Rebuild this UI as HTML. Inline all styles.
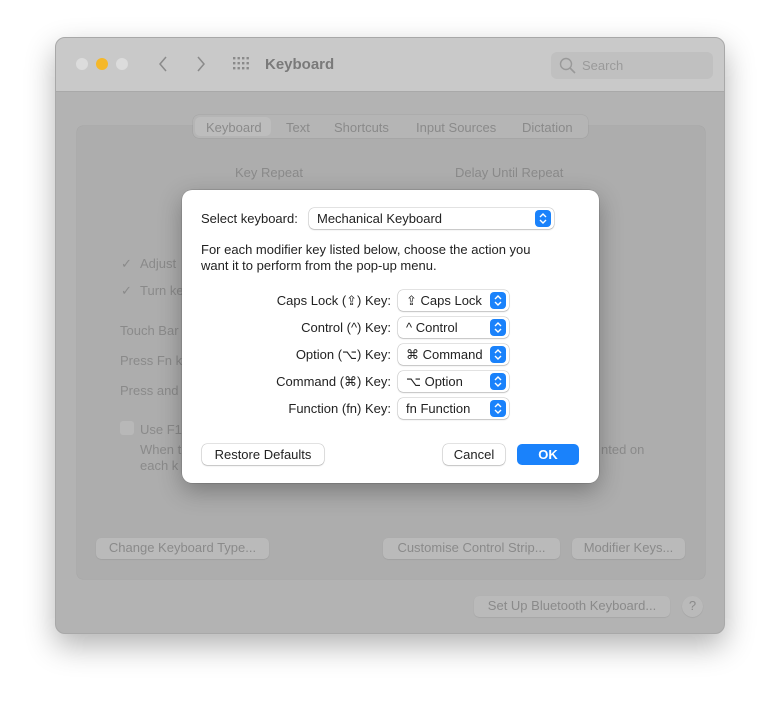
<!DOCTYPE html>
<html><head><style>
*{box-sizing:border-box;margin:0;padding:0}
body{width:780px;height:708px;background:#fff;font-family:"Liberation Sans",sans-serif;font-size:13px;position:relative;overflow:hidden}
.a{position:absolute;white-space:nowrap}
.win{position:absolute;left:55px;top:37px;width:670px;height:597px;border-radius:10px;background:#b3b3b3;box-shadow:0 12px 30px rgba(0,0,0,.3);overflow:hidden;border:1px solid #a8a8a8}
.tb{position:absolute;left:0;top:0;width:100%;height:54px;background:#c9c9c9;border-bottom:1px solid #a9a9a9}
.g{color:#8a8a8a}
.btn{position:absolute;background:#bababa;border-radius:5px;color:#8a8a8a;text-align:center;line-height:20px;height:21px;box-shadow:0 0.5px 1px rgba(0,0,0,.12)}
.dlg{position:absolute;left:182px;top:190px;width:417px;height:293px;background:#fff;border-radius:10px;box-shadow:0 8px 24px rgba(0,0,0,.3),0 0 0 .5px rgba(0,0,0,.2);color:#222}
.pop{position:absolute;height:21px;background:#fff;border-radius:5px;box-shadow:0 0 0 .5px rgba(0,0,0,.22),0 1px 1.5px rgba(0,0,0,.15);padding-left:8px;line-height:21px;color:#222}
.ar{position:absolute;right:3px;top:2px;width:16px;height:17px;background:#1a82fb;border-radius:4px}
.lbl{position:absolute;right:208px;text-align:right;color:#222}
.db{position:absolute;height:21px;background:#fff;border-radius:5px;box-shadow:0 0 0 .5px rgba(0,0,0,.22),0 1px 1.5px rgba(0,0,0,.15);text-align:center;line-height:21px}
</style></head><body>
<div class="win">
 <div class="tb">
  <div class="a" style="left:20px;top:20px;width:12px;height:12px;border-radius:6px;background:#dcdcdc"></div>
  <div class="a" style="left:40px;top:20px;width:12px;height:12px;border-radius:6px;background:#f5b82a"></div>
  <div class="a" style="left:60px;top:20px;width:12px;height:12px;border-radius:6px;background:#dcdcdc"></div>
  <svg class="a" style="left:100px;top:17px" width="14" height="18"><path d="M10 2 L4 9 L10 16" stroke="#8a8a8a" stroke-width="1.5" fill="none"/></svg>
  <svg class="a" style="left:138px;top:17px" width="14" height="18"><path d="M4 2 L10 9 L4 16" stroke="#8a8a8a" stroke-width="1.5" fill="none"/></svg>
  <svg class="a" style="left:177px;top:19px" width="16" height="14" fill="#8a8a8a"><g><rect x="0" y="0" width="2.4" height="2.4"/><rect x="4.5" y="0" width="2.4" height="2.4"/><rect x="9" y="0" width="2.4" height="2.4"/><rect x="13.5" y="0" width="2.4" height="2.4"/><rect x="0" y="5" width="2.4" height="2.4"/><rect x="4.5" y="5" width="2.4" height="2.4"/><rect x="9" y="5" width="2.4" height="2.4"/><rect x="13.5" y="5" width="2.4" height="2.4"/><rect x="0" y="10" width="2.4" height="2.4"/><rect x="4.5" y="10" width="2.4" height="2.4"/><rect x="9" y="10" width="2.4" height="2.4"/><rect x="13.5" y="10" width="2.4" height="2.4"/></g></svg>
  <div class="a" style="left:209px;top:18px;font-size:15px;font-weight:bold;color:#7a7a7a">Keyboard</div>
  <div class="a" style="left:495px;top:14px;width:162px;height:27px;border-radius:6px;background:#c0c0c0"></div>
  <svg class="a" style="left:503px;top:19px" width="18" height="18"><circle cx="7" cy="7" r="5.5" stroke="#999" stroke-width="1.4" fill="none"/><path d="M11 11 L16 16" stroke="#999" stroke-width="1.6"/></svg>
  <div class="a" style="left:526px;top:20px;color:#9a9a9a">Search</div>
 </div>
 <div class="a" style="left:21px;top:88px;width:628px;height:453px;border-radius:6px;background:#adadad;box-shadow:0 0 0 .5px rgba(0,0,0,.08)"></div>
 <div class="a" style="left:137px;top:77px;width:395px;height:23px;border-radius:6px;background:#b5b5b5;box-shadow:0 0 0 .5px rgba(0,0,0,.08)"></div>
 <div class="a" style="left:139px;top:79px;width:76px;height:19px;border-radius:5px;background:#bdbdbd"></div>
 <div class="a g" style="left:150px;top:82px">Keyboard</div>
 <div class="a g" style="left:230px;top:82px">Text</div>
 <div class="a g" style="left:278px;top:82px">Shortcuts</div>
 <div class="a g" style="left:360px;top:82px">Input Sources</div>
 <div class="a g" style="left:466px;top:82px">Dictation</div>
 <div class="a g" style="left:179px;top:127px">Key Repeat</div>
 <div class="a g" style="left:399px;top:127px">Delay Until Repeat</div>
 <div class="a g" style="left:65px;top:218px">✓</div><div class="a g" style="left:84px;top:218px">Adjust</div>
 <div class="a g" style="left:65px;top:245px">✓</div><div class="a g" style="left:84px;top:245px">Turn ke</div>
 <div class="a g" style="left:64px;top:285px">Touch Bar</div>
 <div class="a g" style="left:64px;top:315px">Press Fn k</div>
 <div class="a g" style="left:64px;top:345px">Press and</div>
 <div class="a" style="left:64px;top:383px;width:14px;height:14px;border-radius:3px;background:#b8b8b8"></div>
 <div class="a g" style="left:84px;top:384px">Use F1,</div>
 <div class="a g" style="left:84px;top:404px">When t</div>
 <div class="a g" style="left:84px;top:420px">each k</div>
 <div class="a g" style="left:545px;top:404px">nted on</div>
 <div class="btn" style="left:40px;top:500px;width:173px">Change Keyboard Type...</div>
 <div class="btn" style="left:327px;top:500px;width:177px">Customise Control Strip...</div>
 <div class="btn" style="left:516px;top:500px;width:113px">Modifier Keys...</div>
 <div class="btn" style="left:418px;top:558px;width:196px">Set Up Bluetooth Keyboard...</div>
 <div class="btn" style="left:626px;top:558px;width:21px;border-radius:11px">?</div>
</div>
<div class="dlg">
 <div class="a" style="left:19px;top:21px">Select keyboard:</div>
 <div class="pop" style="left:127px;top:18px;width:245px">Mechanical Keyboard<div class="ar"><svg width="16" height="17"><path d="M5 7 L8 4 L11 7 M5 10 L8 13 L11 10" stroke="#fff" stroke-width="1.4" fill="none"/></svg></div></div>
 <div class="a" style="left:19px;top:52px;line-height:16px">For each modifier key listed below, choose the action you<br>want it to perform from the pop-up menu.</div>
 <div class="lbl" style="top:103px">Caps Lock (⇪) Key:</div>
 <div class="lbl" style="top:130px">Control (^) Key:</div>
 <div class="lbl" style="top:157px">Option (⌥) Key:</div>
 <div class="lbl" style="top:184px">Command (⌘) Key:</div>
 <div class="lbl" style="top:211px">Function (fn) Key:</div>
 <div class="pop" style="left:216px;top:100px;width:111px">⇪ Caps Lock<div class="ar"><svg width="16" height="17"><path d="M5 7 L8 4 L11 7 M5 10 L8 13 L11 10" stroke="#fff" stroke-width="1.4" fill="none"/></svg></div></div>
 <div class="pop" style="left:216px;top:127px;width:111px">^ Control<div class="ar"><svg width="16" height="17"><path d="M5 7 L8 4 L11 7 M5 10 L8 13 L11 10" stroke="#fff" stroke-width="1.4" fill="none"/></svg></div></div>
 <div class="pop" style="left:216px;top:154px;width:111px">⌘ Command<div class="ar"><svg width="16" height="17"><path d="M5 7 L8 4 L11 7 M5 10 L8 13 L11 10" stroke="#fff" stroke-width="1.4" fill="none"/></svg></div></div>
 <div class="pop" style="left:216px;top:181px;width:111px">⌥ Option<div class="ar"><svg width="16" height="17"><path d="M5 7 L8 4 L11 7 M5 10 L8 13 L11 10" stroke="#fff" stroke-width="1.4" fill="none"/></svg></div></div>
 <div class="pop" style="left:216px;top:208px;width:111px">fn Function<div class="ar"><svg width="16" height="17"><path d="M5 7 L8 4 L11 7 M5 10 L8 13 L11 10" stroke="#fff" stroke-width="1.4" fill="none"/></svg></div></div>
 <div class="db" style="left:20px;top:254px;width:122px">Restore Defaults</div>
 <div class="db" style="left:261px;top:254px;width:62px">Cancel</div>
 <div class="db" style="left:335px;top:254px;width:62px;background:#1a82fb;color:#fff;font-weight:bold;box-shadow:none">OK</div>
</div>
</body></html>
